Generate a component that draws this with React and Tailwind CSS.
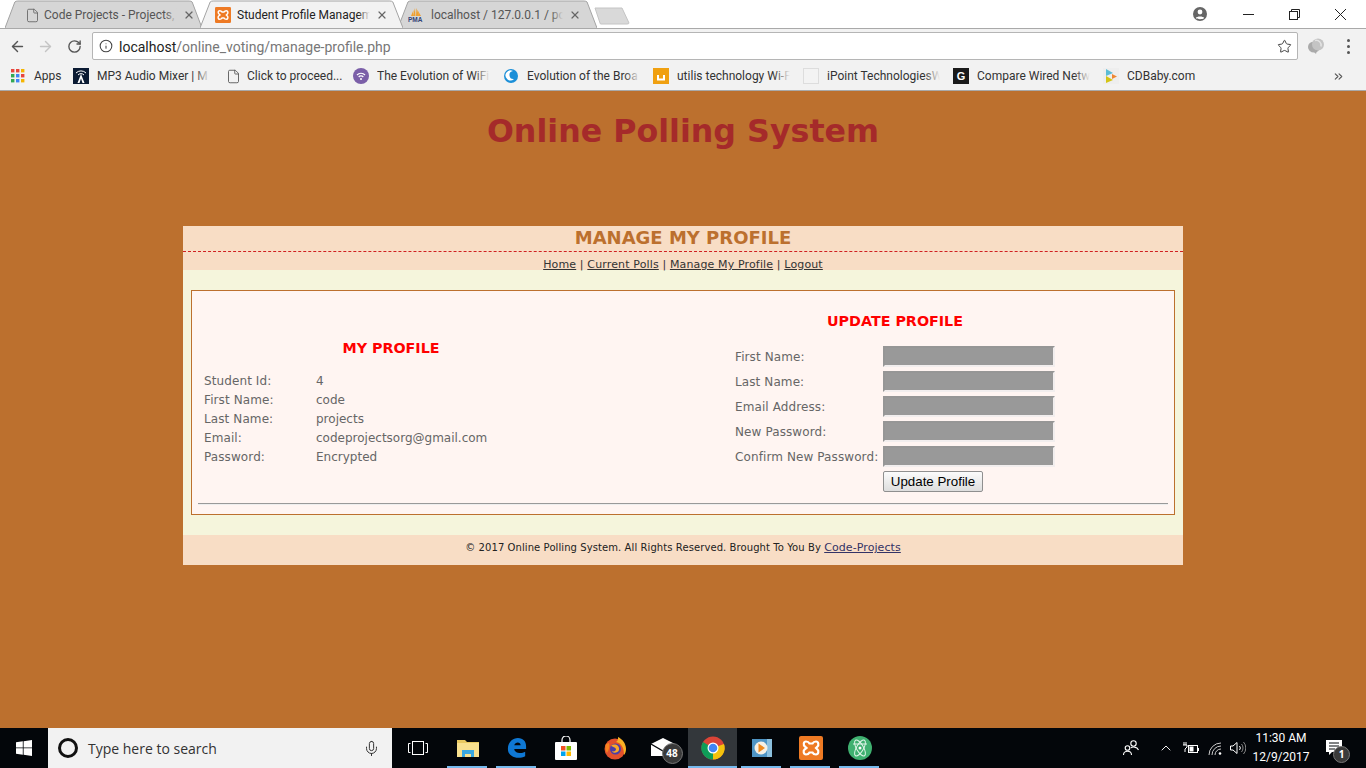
import React from 'react';
import { ArrowLeft, ArrowRight, RotateCw, Info, Star, File, ChevronUp, ChevronsRight, Mic, X } from 'lucide-react';

const XamppIcon = ({ size = 16 }) => (
  <svg width={size} height={size} viewBox="0 0 24 24">
    <rect width="24" height="24" rx="2" fill="#ee7a24" />
    <path d="M7 5.500c2 0 3 1 3.500 2h3c.5-1 1.500-2 3.500-2 2.500 0 3 3.500 1.500 5l-1.500 1.500 1.500 1.500c1.500 1.500 1 5-1.500 5-2 0-3-1-3.500-2h-3c-.5 1-1.500 2-3.500 2-2.500 0-3-3.500-1.500-5L7.500 12 6 10.500C4 9 4.500 5.500 7 5.500z" fill="none" stroke="#fff" strokeWidth="2.200" />
  </svg>
);

const TabShape = ({ fill, stroke }) => (
  <svg className="absolute inset-0 w-full h-full" viewBox="0 0 200 28" preserveAspectRatio="none">
    <path d="M0 28 L10 2 Q11 1 13 1 L187 1 Q189 1 190 2 L200 28" fill={fill} stroke={stroke} strokeWidth="1" vectorEffect="non-scaling-stroke" />
  </svg>
);

const Tab = ({ title, icon, active, className, pad, gap, fade, color }) => (
  <div className={`relative h-7 shrink-0 ${className}`}>
    <TabShape fill={active ? '#f2f2f2' : '#d6d6d6'} stroke="#a3a3a3" />
    <div className={`relative flex items-center h-full pt-[2px] ${pad}`}>
      <span className="w-4 h-4 flex items-center justify-center shrink-0">{icon}</span>
      <div className={`relative flex-1 min-w-0 overflow-hidden whitespace-nowrap text-xs ${gap} ${color}`}>
        {title}
        <div className={`absolute right-0 inset-y-0 w-3 bg-gradient-to-r from-transparent ${fade}`} />
      </div>
      <X size={12} strokeWidth={2.400} className="ml-[6px] shrink-0 text-[#666]" />
    </div>
  </div>
);

const PmaIcon = () => (
  <svg width="16" height="16" viewBox="0 0 16 16">
    <path d="M5 9 L7 1 L7.500 9z M8 9 L8.500 1 L11 9z M3 9 L5.500 3 L5 9z M11 9 L9.500 3 L13 9z" fill="#f0a030" />
    <text x="0" y="15" fontSize="6.500" fontFamily="Liberation Sans" fontWeight="700" fill="#334477">PMA</text>
  </svg>
);

const AppsIcon = () => (
  <svg width="14" height="14" viewBox="0 0 14 14">
    {[0, 5, 10].map((y, r) => [0, 5, 10].map((x, c) => (
      <rect key={`${r}${c}`} x={x} y={y} width="3.400" height="3.400" fill={['#e8453c', '#e8453c', '#f4b400', '#34a853', '#4285f4', '#e8453c', '#34a853', '#4285f4', '#f4b400'][r * 3 + c]} />
    )))}
  </svg>
);

const bookmarks = [
  { w: 'w-[152px]', gap: 'ml-[8px]', text: 'MP3 Audio Mixer | M', fade: true, icon: <svg width="16" height="16" viewBox="0 0 16 16"><rect width="16" height="16" fill="#0b1b33" /><path d="M3 5a7 7 0 0 1 10 0M5 7a4 4 0 0 1 6 0" fill="none" stroke="#fff" strokeWidth="1" /><path d="M8 6 L4.500 15 H6.500 L8 10.500 L9.500 15 H11.500z" fill="#fff" /></svg> },
  { w: 'w-[128px]', gap: 'ml-[6px]', text: 'Click to proceed...', icon: <File size={15} strokeWidth={1.400} className="text-[#555]" /> },
  { w: 'w-[150px]', gap: 'ml-[8px]', text: 'The Evolution of WiFi', fade: true, icon: <svg width="16" height="16" viewBox="0 0 16 16"><circle cx="8" cy="8" r="8" fill="#7b5fa8" /><path d="M4 7a5.500 5.500 0 0 1 8 0M5.700 9a3 3 0 0 1 4.600 0" fill="none" stroke="#fff" strokeWidth="1.200" /><circle cx="8" cy="11" r="1" fill="#fff" /></svg> },
  { w: 'w-[150px]', gap: 'ml-[8px]', text: 'Evolution of the Broa', fade: true, icon: <svg width="16" height="16" viewBox="0 0 16 16"><circle cx="8" cy="8" r="7" fill="#1b8fd8" /><path d="M10 3a5 5 0 1 0 1 8 4 4 0 0 1-1-8z" fill="#fff" /></svg> },
  { w: 'w-[150px]', gap: 'ml-[8px]', text: 'utilis technology Wi-F', fade: true, icon: <svg width="16" height="16" viewBox="0 0 16 16"><rect width="16" height="16" fill="#f0a010" /><path d="M5 7v4.500h6V7" fill="none" stroke="#fff" strokeWidth="2" /></svg> },
  { w: 'w-[150px]', gap: 'ml-[8px]', text: 'iPoint TechnologiesW', fade: true, icon: <span className="block w-4 h-4 bg-[#f3f3f3] border border-[#ddd]" /> },
  { w: 'w-[150px]', gap: 'ml-[8px]', text: 'Compare Wired Netw', fade: true, icon: <span className="flex items-center justify-center w-4 h-4 bg-[#1a1a1a] text-white text-[11px] font-bold font-['Liberation_Sans',sans-serif]">G</span> },
  { w: 'w-[130px]', gap: 'ml-[8px]', text: 'CDBaby.com', icon: <svg width="16" height="16" viewBox="0 0 16 16"><rect width="16" height="16" fill="#eee" /><path d="M3 1 L10 5 L3 8z" fill="#5bbcd6" /><path d="M3 8 L10 12 L3 15z" fill="#d4c414" /><path d="M9 6 L14 8.500 L9 11z" fill="#ee8833" /></svg> },
];

const Chrome = () => (
  <div className="shrink-0 bg-[#f2f2f2] font-['Roboto',sans-serif]">
    {/* tab strip */}
    <div className="flex h-[29px] bg-white border-b border-[#a9a9a9]">
      <div className="flex pl-[5px] items-start">
        <Tab className="w-[197px]" pad="pl-[19px] pr-[7px]" gap="ml-[4px]" color="text-[#555]" title="Code Projects - Projects," fade="to-[#d6d6d6]" icon={<File size={15} strokeWidth={1.400} className="text-[#666]" />} />
        <Tab active className="w-[203px] -ml-[2px] z-10" pad="pl-[15px] pr-[15px]" gap="ml-[6px]" color="text-[#222]" title="Student Profile Managem" fade="to-[#f2f2f2]" icon={<XamppIcon />} />
        <Tab className="w-[199px] -ml-[5px]" pad="pl-[10px] pr-[16px]" gap="ml-[7px]" color="text-[#555]" title="localhost / 127.0.0.1 / pc" fade="to-[#d6d6d6]" icon={<PmaIcon />} />
        <svg width="36" height="18" viewBox="0 0 36 18" className="mt-[7px] -ml-[3px]">
          <path d="M1 1 H28 L35 16 Q35 17 33 17 H7 Q6 17 6 16z" fill="#d9d9d9" stroke="#c4c4c4" />
        </svg>
      </div>
      <div className="ml-auto flex items-center text-[#222]">
        <svg width="16" height="16" viewBox="0 0 16 16" className="mr-[35px]">
          <circle cx="8" cy="8" r="7" fill="#666" />
          <circle cx="8" cy="6" r="2.400" fill="#fff" />
          <path d="M3.800 12c1-2 7.400-2 8.400 0-1 1.600-7.400 1.600-8.400 0z" fill="#fff" />
        </svg>
        <svg width="11" height="11" viewBox="0 0 11 11" className="mr-[35px]"><path d="M0 5.500h11" stroke="#222" /></svg>
        <svg width="11" height="11" viewBox="0 0 11 11" className="mr-[35px]" fill="none" stroke="#222"><rect x="0.500" y="2.500" width="8" height="8" /><path d="M2.500 2.500V.5h8v8H8.500" /></svg>
        <svg width="11" height="11" viewBox="0 0 11 11" className="mr-[20px]" stroke="#222"><path d="M0 0 11 11M11 0 0 11" /></svg>
      </div>
    </div>
    {/* toolbar */}
    <div className="flex items-center h-[34px] pl-[9px] pr-[10px]">
      <ArrowLeft size={17} strokeWidth={2} className="text-[#555]" />
      <ArrowRight size={17} strokeWidth={2} className="ml-[11px] text-[#c4c4c4]" />
      <RotateCw size={15} strokeWidth={2.200} className="ml-[13px] text-[#555]" />
      <div className="ml-[10px] flex items-center h-[28px] w-[1206px] bg-white border border-[#b5b5b5] rounded-[2px] pl-[6px] pr-[5px] text-sm">
        <Info size={14} strokeWidth={1.800} className="text-[#444]" />
        <span className="ml-[6px] pt-[1px] text-[#222]">localhost</span>
        <span className="pt-[1px] text-[#777]">/online_voting/manage-profile.php</span>
        <Star size={15} strokeWidth={1.600} className="ml-auto text-[#444]" />
      </div>
      <svg width="18" height="16" viewBox="0 0 18 16" className="ml-[9px]">
        <ellipse cx="7" cy="9" rx="6" ry="5.500" fill="#aaa" />
        <ellipse cx="11" cy="6.500" rx="6" ry="6" fill="#c4c4c4" />
        <path d="M8 2.500a5 5 0 0 1 6 6" fill="none" stroke="#e4e4e4" strokeWidth="1.500" />
        <path d="M6 13 L9 16 L10 12z" fill="#aaa" />
      </svg>
      <div className="ml-auto mr-[6px] flex flex-col gap-[3px]">
        <span className="block w-[3px] h-[3px] rounded-full bg-[#555]" />
        <span className="block w-[3px] h-[3px] rounded-full bg-[#555]" />
        <span className="block w-[3px] h-[3px] rounded-full bg-[#555]" />
      </div>
    </div>
    {/* bookmarks */}
    <div className="flex items-center h-[28px] pb-[1px] pl-[11px] border-b border-[#a9a9a9] text-xs text-[#333] whitespace-nowrap">
      <div className="flex items-center w-[62px]">
        <AppsIcon />
        <span className="ml-[9px]">Apps</span>
      </div>
      {bookmarks.map((b) => (
        <div key={b.text} className={`flex items-center shrink-0 ${b.w}`}>
          <span className="w-4 h-4 flex items-center justify-center shrink-0">{b.icon}</span>
          <span className={`relative w-[113px] overflow-hidden ${b.gap}`}>
            {b.text}
            {b.fade && <span className="absolute right-0 inset-y-0 w-4 bg-gradient-to-r from-transparent to-[#f2f2f2]" />}
          </span>
        </div>
      ))}
      <ChevronsRight size={13} strokeWidth={2} className="ml-auto mr-[21px] text-[#555]" />
    </div>
  </div>
);

const profile = [
  ['Student Id:', '4'],
  ['First Name:', 'code'],
  ['Last Name:', 'projects'],
  ['Email:', 'codeprojectsorg@gmail.com'],
  ['Password:', 'Encrypted'],
];

const fields = ['First Name:', 'Last Name:', 'Email Address:', 'New Password:', 'Confirm New Password:'];

const Page = () => (
  <main className="flex-1 min-h-0 bg-[#bc702e] font-['DejaVu_Sans',sans-serif] flex flex-col items-center">
    <h1 className="mt-[20px] h-[40px] leading-[40px] text-[31.700px] font-bold text-[#a52a2a]">Online Polling System</h1>
    <div className="mt-[75px] w-[1000px] bg-[#f5f5dc]">
      <div className="bg-[#f8ddc5] h-[44px] text-center">
        <div className="h-[26px] leading-[23px] text-lg font-bold text-[#bc702e] border-b border-dashed border-[#d02020]">MANAGE MY PROFILE</div>
        <div className="h-[18px] leading-[18px] pt-[4px] text-[11px] tracking-[0.140px] text-[#333]">
          <a className="underline">Home</a> | <a className="underline">Current Polls</a> | <a className="underline">Manage My Profile</a> | <a className="underline">Logout</a>
        </div>
      </div>
      <div className="pt-[20px] pb-[20px] px-[8px]">
        <div className="h-[225px] border border-[#bc702e] bg-[#fff5f2] px-[6px] flex flex-col text-xs text-[#666]">
          <div className="flex-1 flex">
            <div className="w-[380px] pl-[6px]">
              <h2 className="mt-[49px] text-center h-[16px] leading-[16px] text-[14.300px] font-bold text-[#ff0000]">MY PROFILE</h2>
              <div className="mt-[16px]">
                {profile.map(([k, v]) => (
                  <div key={k} className="flex h-[19px] leading-[19px]">
                    <span className="w-[112px] tracking-[0.100px]">{k}</span>
                    <span>{v}</span>
                  </div>
                ))}
              </div>
            </div>
            <div className="ml-[157px] w-[320px]">
              <h2 className="mt-[22px] text-center h-[16px] leading-[16px] text-[14.300px] font-bold text-[#ff0000]">UPDATE PROFILE</h2>
              <div className="mt-[15px]">
                {fields.map((f) => (
                  <div key={f} className="flex items-center h-[25px]">
                    <label className="w-[148px] shrink-0 whitespace-nowrap tracking-[0.100px]">{f}</label>
                    <input className="w-[172px] h-[21px] bg-[#999] border-2 border-t-[#969696] border-l-[#969696] border-r-[#f2eeee] border-b-[#f2eeee] outline-none" />
                  </div>
                ))}
              </div>
              <button className="mt-[2px] ml-[148px] w-[100px] h-[21px] rounded-[2px] border border-[#8f8f8f] bg-gradient-to-b from-[#fbfbfb] to-[#dedede] text-[13.330px] text-black font-['Liberation_Sans',sans-serif]">Update Profile</button>
            </div>
          </div>
          <hr className="mb-[9px] border-0 border-t border-t-[#999] border-b border-b-[#eee]" />
        </div>
      </div>
      <div className="bg-[#f8ddc5] h-[30px] leading-[25px] text-center text-[10px] tracking-[0.085px] text-[#222]">
        © 2017 Online Polling System. All Rights Reserved. Brought To You By <a className="underline text-[11px] text-[#333366]">Code-Projects</a>
      </div>
    </div>
  </main>
);

const WinLogo = () => (
  <svg width="16" height="16" viewBox="0 0 16 16" fill="#fff">
    <path d="M0 2.300 6.800 1.300V7.500H0zM7.600 1.200 16 0V7.500H7.600zM0 8.300H6.800V14.700L0 13.700zM7.600 8.300H16V16L7.600 14.800z" />
  </svg>
);

const TaskSlot = ({ children, on, active }) => (
  <div className={`relative w-[49px] h-10 flex items-center justify-center shrink-0 ${active ? 'bg-[#33373b]' : ''}`}>
    {children}
    {on && <span className={`absolute bottom-0 h-[2px] bg-[#76b9ed] ${active ? 'left-0 right-0' : 'left-[4px] right-[5px]'}`} />}
  </div>
);

const Badge = ({ n, className }) => (
  <span className={`absolute flex items-center justify-center rounded-full bg-[#3a3a3a] border border-[#777] text-[10px] font-bold text-white ${className}`}>{n}</span>
);

const Taskbar = () => (
  <div className="shrink-0 h-10 bg-[#03060a] flex items-center text-white font-['Open_Sans',sans-serif]">
    <div className="w-12 h-10 flex items-center justify-center"><WinLogo /></div>
    <div className="w-[344px] h-10 bg-[#f2f2f2] flex items-center pl-[10px] text-[#333] text-sm">
      <span className="block w-5 h-5 rounded-full border-[3px] border-[#111]" />
      <span className="ml-[10px] pt-[1px]">Type here to search</span>
      <Mic size={17} strokeWidth={1.400} className="ml-auto mr-[12px] text-[#333]" />
    </div>
    {/* task view */}
    <div className="w-[51px] flex justify-center">
      <svg width="20" height="14" viewBox="0 0 20 14" fill="none" stroke="#fff"><rect x="4.500" y="0.500" width="11" height="13" /><path d="M2.500 2.500H.5v9h2M17.500 2.500h2v9h-2" /></svg>
    </div>
    <TaskSlot on>
      <svg width="22" height="18" viewBox="0 0 22 18"><path d="M0 1h8l2 2h12v15H0z" fill="#e8c860" /><rect y="4" width="22" height="14" fill="#f8e08e" /><path d="M5 11h12v7h-3v-3H8v3H5z" fill="#3aa8e0" /></svg>
    </TaskSlot>
    <TaskSlot on>
      <svg width="20" height="20" viewBox="0 0 22 22"><path d="M1 12C1 5 6 0 12 0c6 0 9 4 9 9v3H8c0 4 7 6 12 3v5c-8 4-19 1-19-8zM8 8h7c0-4-6-4-7 0z" fill="#0f78d4" /></svg>
    </TaskSlot>
    <TaskSlot>
      <svg width="22" height="24" viewBox="0 0 22 24"><path d="M7 7V4a4 4 0 0 1 8 0v3" fill="none" stroke="#fff" strokeWidth="1.200" /><rect y="6" width="22" height="18" rx="1" fill="#fff" /><rect x="6" y="10" width="4.500" height="4.500" fill="#f25022" /><rect x="11.500" y="10" width="4.500" height="4.500" fill="#7fba00" /><rect x="6" y="15.500" width="4.500" height="4.500" fill="#00a4ef" /><rect x="11.500" y="15.500" width="4.500" height="4.500" fill="#ffb900" /></svg>
    </TaskSlot>
    <TaskSlot>
      <svg width="24" height="24" viewBox="0 0 24 24"><circle cx="12" cy="13" r="10.500" fill="#e2512c" /><path d="M15 1c4 2 8 6 8 12 0 3-1 5-2 6 0-8-3-12-8-13 2-1 2-3 2-5z" fill="#f9b024" /><path d="M3 8c-1 3-1 6 1 9 2-3 3-7 2-10z" fill="#f6821f" /><circle cx="12.500" cy="13" r="5.500" fill="#4a3fa8" /><path d="M8 10c3-3 9-1 8 4-1 3-6 4-7 1 2 1 4 0 4-2-1-2-3-2-5-3z" fill="#f9a825" /></svg>
    </TaskSlot>
    <TaskSlot>
      <div className="relative -ml-[2px] -mt-[2px]">
        <svg width="24" height="18" viewBox="0 0 24 18"><path d="M0 6 12 0 24 6V18H0z" fill="#fff" /><path d="M0 6 12 13 24 6" fill="none" stroke="#03060a" strokeWidth="1.200" /></svg>
        <Badge n="48" className="w-[21px] h-[21px] -right-[8px] -bottom-[8px]" />
      </div>
    </TaskSlot>
    <TaskSlot on active>
      <svg width="24" height="24" viewBox="0 0 24 24"><circle cx="12" cy="12" r="11.500" fill="#db4437" /><path d="M12 12 23 8A11.500 11.500 0 0 1 12 23.500z" fill="#f4c20d" /><path d="M12 12 12 23.500A11.500 11.500 0 0 1 2 6z" fill="#0f9d58" /><circle cx="12" cy="12" r="5.500" fill="#fff" /><circle cx="12" cy="12" r="4.300" fill="#4285f4" /></svg>
    </TaskSlot>
    <TaskSlot on>
      <svg width="20" height="18" viewBox="0 0 20 18"><rect width="20" height="18" fill="#4e94c4" /><rect x="15" width="5" height="18" fill="#8cc0de" /><circle cx="9" cy="9" r="6.500" fill="#f6f0e4" /><path d="M6.500 4.500 13 9l-6.500 4.500z" fill="#f08a1d" /></svg>
    </TaskSlot>
    <TaskSlot on><XamppIcon size={24} /></TaskSlot>
    <TaskSlot on>
      <svg width="24" height="24" viewBox="0 0 24 24"><circle cx="12" cy="12" r="12" fill="#3fb070" /><g fill="none" stroke="#dff5e8" strokeWidth="1"><ellipse cx="12" cy="12" rx="9" ry="3.500" transform="rotate(60 12 12)" /><ellipse cx="12" cy="12" rx="9" ry="3.500" transform="rotate(-60 12 12)" /><path d="M5 8h14" /></g><circle cx="12" cy="12" r="1.500" fill="#fff" /></svg>
    </TaskSlot>
    <div className="ml-auto flex items-center h-10">
      <svg width="16" height="16" viewBox="0 0 16 16" fill="none" stroke="#fff" strokeWidth="1.100"><circle cx="4.500" cy="8" r="2.300" /><path d="M.5 15c0-5 8-5 8 0" /><circle cx="10.500" cy="3.500" r="2.700" /><path d="M8 8c1-1.500 6-1.500 7.500 2" /></svg>
      <ChevronUp size={16} strokeWidth={1.400} className="ml-[19px]" />
      <svg width="16" height="12" viewBox="0 0 16 12" className="ml-[9px]" fill="none" stroke="#fff"><rect x="5.500" y="3.500" width="9" height="7" /><rect x="6.500" y="4.500" width="4" height="5" fill="#fff" stroke="none" /><path d="M15.500 6v3" /><path d="M3 0v3M1 0v3M0 3h4v2L2 7v3" /></svg>
      <svg width="15" height="13" viewBox="0 0 15 13" className="ml-[9px]" fill="none" stroke="#ccc"><path d="M1 13A12 12 0 0 1 13 1M4 13a9 9 0 0 1 9-9M7 13a6 6 0 0 1 6-6" /><circle cx="12" cy="11.500" r="1.300" fill="#fff" stroke="none" /></svg>
      <svg width="16" height="14" viewBox="0 0 16 14" className="ml-[7px]" fill="none" stroke="#fff"><path d="M.5 5H3L7 1.500v11L3 9H.5z" /><path d="M9.500 5a3 3 0 0 1 0 4" /><path d="M11.500 3a6 6 0 0 1 0 8M13.500 1a9 9 0 0 1 0 12" stroke="#888" /></svg>
      <div className="w-[70px] text-center text-xs leading-[19px] font-['Roboto',sans-serif]">
        <div>11:30 AM</div>
        <div>12/9/2017</div>
      </div>
      <div className="relative ml-[10px] mr-[24px]">
        <svg width="16" height="16" viewBox="0 0 16 16"><path d="M0 0h16v12H6l-3 3v-3H0z" fill="#fff" /><path d="M3 3h10M3 6h10M3 9h6" stroke="#03060a" /></svg>
        <Badge n="1" className="w-[17px] h-[17px] -right-[8px] -bottom-[7px]" />
      </div>
    </div>
  </div>
);

export default function App() {
  return (
    <div className="h-screen flex flex-col overflow-hidden">
      <Chrome />
      <Page />
      <Taskbar />
    </div>
  );
}
